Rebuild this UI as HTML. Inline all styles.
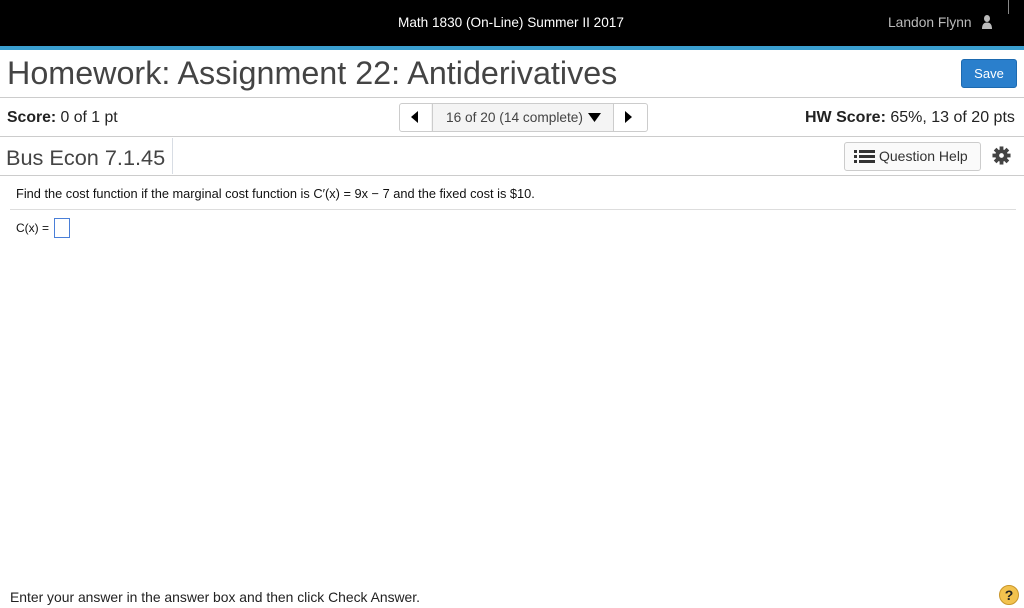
<!DOCTYPE html>
<html><head><style>
*{margin:0;padding:0;box-sizing:border-box}
body{width:1024px;height:608px;position:relative;background:#fff;font-family:"Liberation Sans",sans-serif;color:#333;overflow:hidden}
.a{position:absolute;white-space:nowrap}
</style></head><body>
<div class="a" style="left:0;top:0;width:1024px;height:46px;background:#000"></div>
<div class="a" style="left:0;top:46px;width:1024px;height:4px;background:#3a9fd0"></div>
<div class="a" style="left:1008px;top:0;width:1px;height:14px;background:#888"></div>
<div class="a" style="left:398px;top:15px;font-size:13.6px;color:#fff">Math 1830 (On-Line) Summer II 2017</div>
<div class="a" style="left:888px;top:15px;font-size:13.8px;color:#bbb">Landon Flynn</div>
<svg class="a" style="left:981px;top:14px" width="12" height="16" viewBox="0 0 12 16"><ellipse cx="6" cy="4.5" rx="3" ry="3.5" fill="#bbb"/><path d="M1 15 Q1 8.5 6 8.5 Q11 8.5 11 15Z" fill="#bbb"/></svg>
<div class="a" style="left:7px;top:55px;font-size:32.3px;color:#444">Homework: Assignment 22: Antiderivatives</div>
<div class="a" style="left:961px;top:59px;width:56px;height:29px;background:#2a7fcc;border:1px solid #1d6ab0;border-radius:3px;color:#fff;font-size:13px;text-align:center;line-height:27px">Save</div>
<div class="a" style="left:0;top:97px;width:1024px;height:1px;background:#ccc"></div>
<div class="a" style="left:7px;top:109px;font-size:15.8px;color:#222"><b>Score:</b> 0 of 1 pt</div>
<div class="a" style="left:399px;top:103px;width:249px;height:29px;border:1px solid #ccc;border-radius:3px"></div>
<div class="a" style="left:431px;top:104px;width:182px;height:27px;background:#f4f4f4"></div>
<div class="a" style="left:432px;top:104px;width:1px;height:27px;background:#ccc"></div>
<div class="a" style="left:613px;top:104px;width:1px;height:27px;background:#ccc"></div>
<svg class="a" style="left:411px;top:111px" width="8" height="12"><path d="M7 0V12L0 6Z" fill="#000"/></svg>
<div class="a" style="left:446px;top:110px;font-size:13.7px;color:#444">16 of 20 (14 complete)</div>
<svg class="a" style="left:588px;top:113px" width="13" height="9"><path d="M0 0H13L6.5 9Z" fill="#000"/></svg>
<svg class="a" style="left:625px;top:111px" width="8" height="12"><path d="M0 0V12L7 6Z" fill="#000"/></svg>
<div class="a" style="left:805px;top:109px;font-size:16px;color:#222"><b>HW Score:</b> 65%, 13 of 20 pts</div>
<div class="a" style="left:0;top:136px;width:1024px;height:1px;background:#ccc"></div>
<div class="a" style="left:6px;top:145px;font-size:21.7px;color:#444">Bus Econ 7.1.45</div>
<div class="a" style="left:172px;top:138px;width:1px;height:36px;background:#d8dde4"></div>
<div class="a" style="left:844px;top:142px;width:137px;height:29px;border:1px solid #ccc;border-radius:3px;background:#fafafa"></div>
<svg class="a" style="left:854px;top:149px" width="22" height="16"><g fill="#333"><rect x="0" y="1" width="3" height="3"/><rect x="5" y="1" width="16" height="3"/><rect x="0" y="6" width="3" height="3"/><rect x="5" y="6" width="16" height="3"/><rect x="0" y="11" width="3" height="3"/><rect x="5" y="11" width="16" height="3"/></g></svg>
<div class="a" style="left:879px;top:148px;font-size:14px;color:#333">Question Help</div>
<svg class="a" style="left:992px;top:146px" width="19" height="19" viewBox="-10 -10 20 20"><g fill="#444"><circle r="6.5"/><g id="t"><rect x="-2" y="-9.5" width="4" height="19"/></g><use href="#t" transform="rotate(45)"/><use href="#t" transform="rotate(90)"/><use href="#t" transform="rotate(135)"/></g><circle r="2.5" fill="#fff"/></svg>
<div class="a" style="left:0;top:175px;width:1024px;height:1px;background:#ccc"></div>
<div class="a" style="left:16px;top:186px;font-size:12.8px;color:#111">Find the cost function if the marginal cost function is C′(x) = 9x − 7 and the fixed cost is $10.</div>
<div class="a" style="left:10px;top:209px;width:1006px;height:1px;background:#ddd"></div>
<div class="a" style="left:16px;top:221px;font-size:12px;color:#111">C(x) =</div>
<div class="a" style="left:54px;top:218px;width:16px;height:20px;border:1px solid #4a7fd8"></div>
<div class="a" style="left:10px;top:589px;font-size:13.9px;color:#222">Enter your answer in the answer box and then click Check Answer.</div>
<div class="a" style="left:999px;top:585px;width:20px;height:20px;border-radius:50%;background:#f2c24e;border:1px solid #c9962a;text-align:center;font-weight:bold;font-size:14px;line-height:18px;color:#222">?</div>
</body></html>
